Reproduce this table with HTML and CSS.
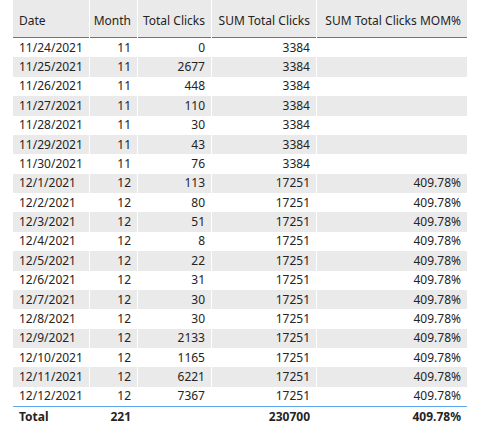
FILE: index.html
```html
<!DOCTYPE html>
<html>
<head>
<meta charset="utf-8">
<link rel="stylesheet" href="styles.css">
</head>
<body>
<div class="tbl">
  <div class="row head">
    <div class="c l">Date</div><div class="c">Month</div><div class="c">Total Clicks</div><div class="c">SUM Total Clicks</div><div class="c">SUM Total Clicks MOM%</div>
  </div>
  <div class="row"><div class="c l">11/24/2021</div><div class="c">11</div><div class="c">0</div><div class="c">3384</div><div class="c"></div></div>
  <div class="row"><div class="c l">11/25/2021</div><div class="c">11</div><div class="c">2677</div><div class="c">3384</div><div class="c"></div></div>
  <div class="row"><div class="c l">11/26/2021</div><div class="c">11</div><div class="c">448</div><div class="c">3384</div><div class="c"></div></div>
  <div class="row"><div class="c l">11/27/2021</div><div class="c">11</div><div class="c">110</div><div class="c">3384</div><div class="c"></div></div>
  <div class="row"><div class="c l">11/28/2021</div><div class="c">11</div><div class="c">30</div><div class="c">3384</div><div class="c"></div></div>
  <div class="row"><div class="c l">11/29/2021</div><div class="c">11</div><div class="c">43</div><div class="c">3384</div><div class="c"></div></div>
  <div class="row"><div class="c l">11/30/2021</div><div class="c">11</div><div class="c">76</div><div class="c">3384</div><div class="c"></div></div>
  <div class="row"><div class="c l">12/1/2021</div><div class="c">12</div><div class="c">113</div><div class="c">17251</div><div class="c">409.78%</div></div>
  <div class="row"><div class="c l">12/2/2021</div><div class="c">12</div><div class="c">80</div><div class="c">17251</div><div class="c">409.78%</div></div>
  <div class="row"><div class="c l">12/3/2021</div><div class="c">12</div><div class="c">51</div><div class="c">17251</div><div class="c">409.78%</div></div>
  <div class="row"><div class="c l">12/4/2021</div><div class="c">12</div><div class="c">8</div><div class="c">17251</div><div class="c">409.78%</div></div>
  <div class="row"><div class="c l">12/5/2021</div><div class="c">12</div><div class="c">22</div><div class="c">17251</div><div class="c">409.78%</div></div>
  <div class="row"><div class="c l">12/6/2021</div><div class="c">12</div><div class="c">31</div><div class="c">17251</div><div class="c">409.78%</div></div>
  <div class="row"><div class="c l">12/7/2021</div><div class="c">12</div><div class="c">30</div><div class="c">17251</div><div class="c">409.78%</div></div>
  <div class="row"><div class="c l">12/8/2021</div><div class="c">12</div><div class="c">30</div><div class="c">17251</div><div class="c">409.78%</div></div>
  <div class="row"><div class="c l">12/9/2021</div><div class="c">12</div><div class="c">2133</div><div class="c">17251</div><div class="c">409.78%</div></div>
  <div class="row"><div class="c l">12/10/2021</div><div class="c">12</div><div class="c">1165</div><div class="c">17251</div><div class="c">409.78%</div></div>
  <div class="row"><div class="c l">12/11/2021</div><div class="c">12</div><div class="c">6221</div><div class="c">17251</div><div class="c">409.78%</div></div>
  <div class="row"><div class="c l">12/12/2021</div><div class="c">12</div><div class="c">7367</div><div class="c">17251</div><div class="c">409.78%</div></div>
  <div class="row total"><div class="c l">Total</div><div class="c">221</div><div class="c"></div><div class="c">230700</div><div class="c">409.78%</div></div>
</div>
</body>
</html>
```
FILE: styles.css
```css
html, body {
  margin: 0;
  padding: 0;
  background: #ffffff;
}
body {
  font-family: "Noto Sans", "Open Sans", sans-serif;
  font-size: 12px;
  color: #252423;
}
.tbl {
  display: flex;
  flex-direction: column;
  width: 454px;
  margin-left: 13px;
}
.row {
  display: grid;
  grid-template-columns: 76px 47px 73px 104px 150px;
  column-gap: 1px;
  height: 19.375px;
}
.row:nth-child(odd):not(.total) .c {
  background: #eaeaea;
}
.c {
  display: flex;
  align-items: center;
  justify-content: flex-end;
  padding: 0 6px 0 5px;
  white-space: nowrap;
  line-height: 16px;
}
.c.l {
  justify-content: flex-start;
  padding: 0 5px 0 6px;
}
.head {
  height: 38px;
}
.head .c {
  background: #fff;
  border-bottom: 1px solid #118dff;
  align-items: flex-start;
  padding-top: 13px;
  box-sizing: border-box;
}
.total {
  height: 19px;
  border-top: 1px solid #5ea8f0;
  font-weight: bold;
}
```
